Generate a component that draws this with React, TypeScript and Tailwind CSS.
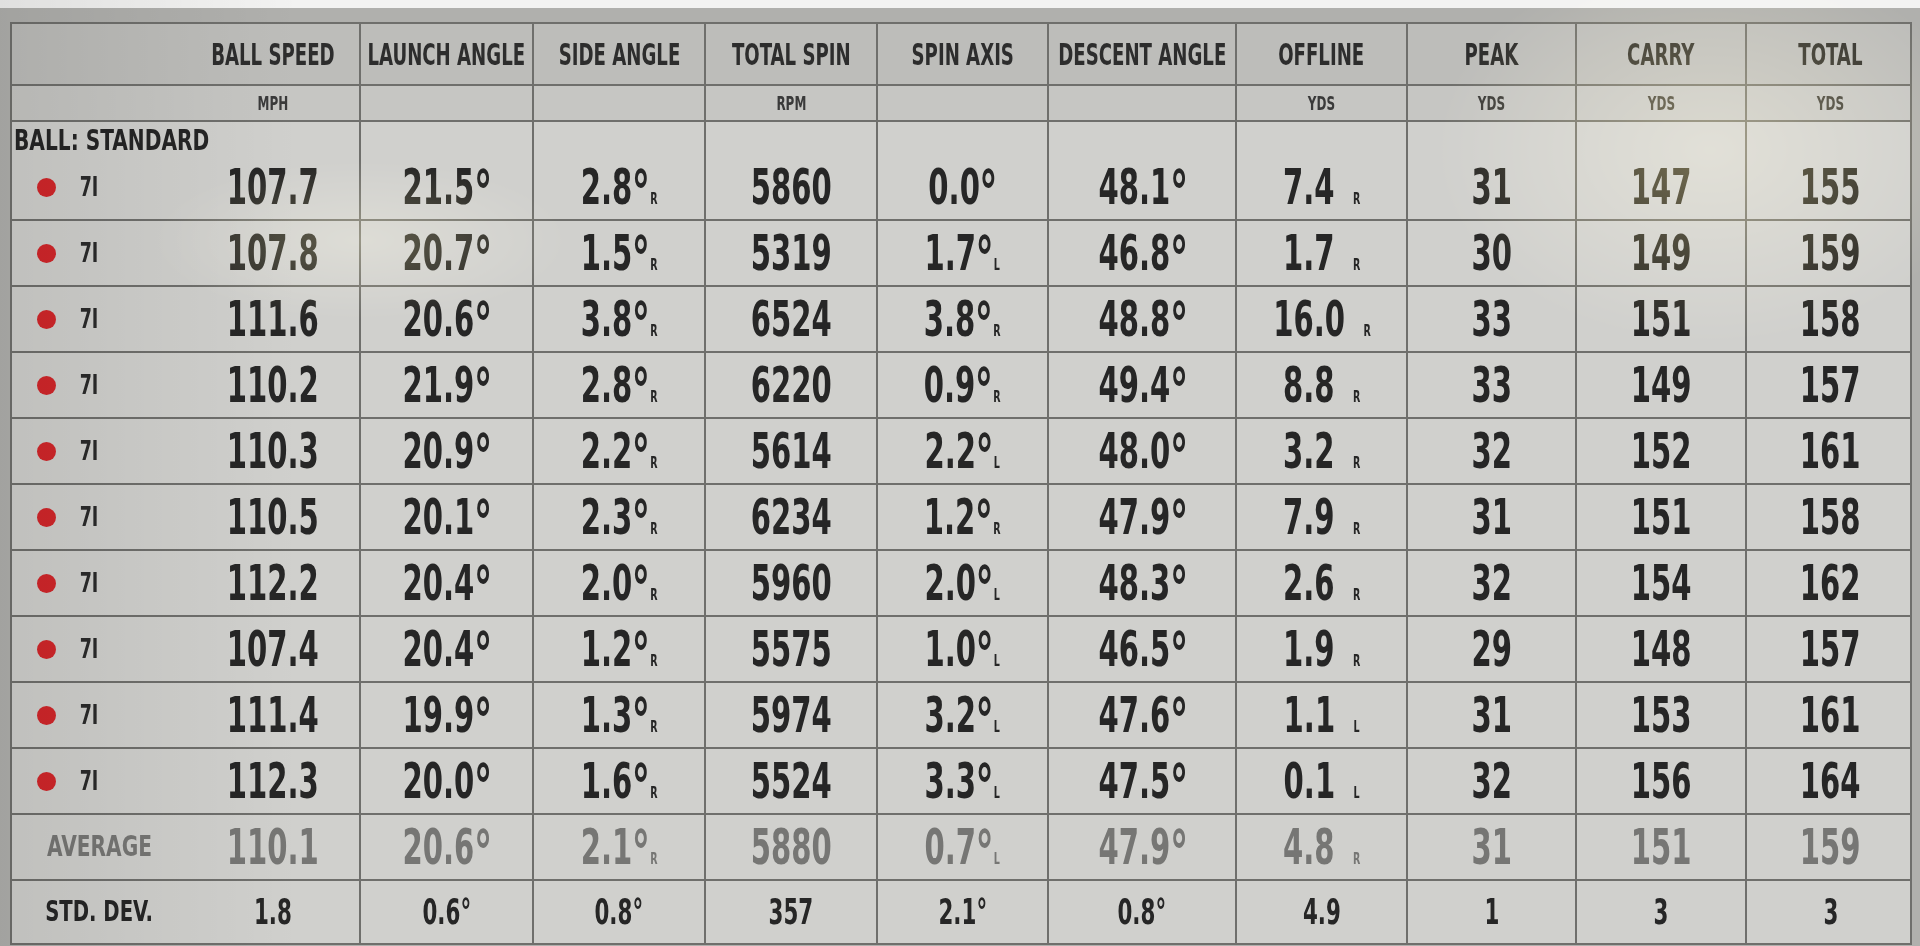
import React from "react"

type V = [string, string?, boolean?]

const COLS =
  "grid grid-cols-[175px_172px_173px_172px_172px_171px_188px_171px_169px_170px_169px]"

const headers = [
  "BALL SPEED",
  "LAUNCH ANGLE",
  "SIDE ANGLE",
  "TOTAL SPIN",
  "SPIN AXIS",
  "DESCENT ANGLE",
  "OFFLINE",
  "PEAK",
  "CARRY",
  "TOTAL",
]
const units = ["MPH", "", "", "RPM", "", "", "YDS", "YDS", "YDS", "YDS"]

const shots: V[][] = [
  [["107.7"], ["21.5°"], ["2.8°", "R"], ["5860"], ["0.0°"], ["48.1°"], ["7.4", "R", true], ["31"], ["147"], ["155"]],
  [["107.8"], ["20.7°"], ["1.5°", "R"], ["5319"], ["1.7°", "L"], ["46.8°"], ["1.7", "R", true], ["30"], ["149"], ["159"]],
  [["111.6"], ["20.6°"], ["3.8°", "R"], ["6524"], ["3.8°", "R"], ["48.8°"], ["16.0", "R", true], ["33"], ["151"], ["158"]],
  [["110.2"], ["21.9°"], ["2.8°", "R"], ["6220"], ["0.9°", "R"], ["49.4°"], ["8.8", "R", true], ["33"], ["149"], ["157"]],
  [["110.3"], ["20.9°"], ["2.2°", "R"], ["5614"], ["2.2°", "L"], ["48.0°"], ["3.2", "R", true], ["32"], ["152"], ["161"]],
  [["110.5"], ["20.1°"], ["2.3°", "R"], ["6234"], ["1.2°", "R"], ["47.9°"], ["7.9", "R", true], ["31"], ["151"], ["158"]],
  [["112.2"], ["20.4°"], ["2.0°", "R"], ["5960"], ["2.0°", "L"], ["48.3°"], ["2.6", "R", true], ["32"], ["154"], ["162"]],
  [["107.4"], ["20.4°"], ["1.2°", "R"], ["5575"], ["1.0°", "L"], ["46.5°"], ["1.9", "R", true], ["29"], ["148"], ["157"]],
  [["111.4"], ["19.9°"], ["1.3°", "R"], ["5974"], ["3.2°", "L"], ["47.6°"], ["1.1", "L", true], ["31"], ["153"], ["161"]],
  [["112.3"], ["20.0°"], ["1.6°", "R"], ["5524"], ["3.3°", "L"], ["47.5°"], ["0.1", "L", true], ["32"], ["156"], ["164"]],
]

const average: V[] = [["110.1"], ["20.6°"], ["2.1°", "R"], ["5880"], ["0.7°", "L"], ["47.9°"], ["4.8", "R", true], ["31"], ["151"], ["159"]]
const stdDev = ["1.8", "0.6°", "0.8°", "357", "2.1°", "0.8°", "4.9", "1", "3", "3"]

function Num({ v }: { v: V }) {
  const [n, s, gap] = v
  const deg = n.endsWith("°")
  return (
    <span className="inline-flex items-baseline whitespace-nowrap scale-x-[0.66] text-[49px] font-bold leading-none">
      <span>{deg ? n.slice(0, -1) : n}</span>
      {deg && <span className="ml-[2px] inline-block origin-top scale-[1.25]">°</span>}
      {s && <span className={gap ? "ml-[28px] text-[16px] font-semibold" : "ml-[3px] text-[16px] font-semibold"}>{s}</span>}
    </span>
  )
}

function Cell({ i, children, className = "" }: { i: number; children?: React.ReactNode; className?: string }) {
  return (
    <div className={`flex items-center justify-center ${i > 1 ? "border-l-2 border-[#6f6f6c]" : ""} ${className}`}>
      {children}
    </div>
  )
}

function Dot() {
  return <span className="h-[19px] w-[19px] rounded-full bg-[#d1262a]" />
}

export default function App() {
  return (
    <div className="relative h-[946px] w-[1920px] overflow-hidden bg-[#b0b0ad] font-['DejaVu_Sans_Condensed','DejaVu_Sans',sans-serif] font-stretch-condensed text-[#262626]">
      <div className="h-[8px] bg-[#f3f3f2]" />
      <div className="pl-[10px] pt-[14px]">
        <div className="w-[1902px] border-2 border-b-0 border-[#6f6f6c] bg-[#d0d0cd]">
          {/* headers */}
          <div className={`${COLS} h-[62px] border-b-2 border-[#6f6f6c] bg-[#bdbdba]`}>
            <Cell i={0} />
            {headers.map((h, k) => (
              <Cell key={h} i={k + 1}>
                <span className="inline-block whitespace-nowrap scale-x-[0.65] text-[31px] font-bold text-[#2d2d2d]">{h}</span>
              </Cell>
            ))}
          </div>
          <div className={`${COLS} h-[36px] border-b-2 border-[#6f6f6c] bg-[#c6c6c3]`}>
            <Cell i={0} />
            {units.map((u, k) => (
              <Cell key={k} i={k + 1}>
                <span className="inline-block scale-x-[0.7] text-[19px] font-semibold text-[#3a3a3a]">{u}</span>
              </Cell>
            ))}
          </div>
          <div className={`${COLS} h-[33px]`}>
            <div className="flex items-end pl-[2px]">
              <span className="inline-block origin-left whitespace-nowrap scale-x-[0.8] text-[28px] font-bold leading-none text-[#252525]">
                BALL: STANDARD
              </span>
            </div>
            {headers.map((_, k) => (
              <Cell key={k} i={k + 1} />
            ))}
          </div>
          {shots.map((row, r) => (
            <div key={r} className={`${COLS} h-[66px] border-b-2 border-[#6f6f6c]`}>
              <div className="flex items-center gap-[20px] pl-[25px]">
                <Dot />
                <span className="inline-block scale-x-[0.72] text-[27px] font-semibold text-[#2a2a2a]">7I</span>
              </div>
              {row.map((v, k) => (
                <Cell key={k} i={k + 1}>
                  <Num v={v} />
                </Cell>
              ))}
            </div>
          ))}
          <div className={`${COLS} h-[66px] border-b-2 border-[#6f6f6c] text-[#767674]`}>
            <Cell i={0}>
              <span className="inline-block scale-x-[0.8] text-[28px] font-bold">AVERAGE</span>
            </Cell>
            {average.map((v, k) => (
              <Cell key={k} i={k + 1}>
                <Num v={v} />
              </Cell>
            ))}
          </div>
          <div className={`${COLS} h-[64px] border-b-2 border-[#6f6f6c]`}>
            <Cell i={0}>
              <span className="inline-block whitespace-nowrap scale-x-[0.78] text-[28px] font-bold">STD. DEV.</span>
            </Cell>
            {stdDev.map((v, k) => (
              <Cell key={k} i={k + 1}>
                <span className="inline-block whitespace-nowrap scale-x-[0.68] text-[35px] font-bold">{v}</span>
              </Cell>
            ))}
          </div>
        </div>
      </div>

      {/* screen glare from the photo */}
      <div className="pointer-events-none absolute left-[1440px] top-[-40px] h-[380px] w-[540px] bg-[radial-gradient(ellipse_at_center,rgba(118,108,66,0.8)_0%,rgba(118,108,66,0.3)_45%,rgba(118,108,66,0)_72%)] mix-blend-screen" />
      <div className="pointer-events-none absolute left-[150px] top-[160px] h-[160px] w-[420px] bg-[radial-gradient(ellipse_at_center,rgba(110,104,70,0.65)_0%,rgba(110,104,70,0)_70%)] mix-blend-screen" />
      <div className="pointer-events-none absolute left-0 top-0 h-[946px] w-[300px] bg-[linear-gradient(to_right,rgba(0,0,0,0.08),rgba(0,0,0,0))]" />
    </div>
  )
}
